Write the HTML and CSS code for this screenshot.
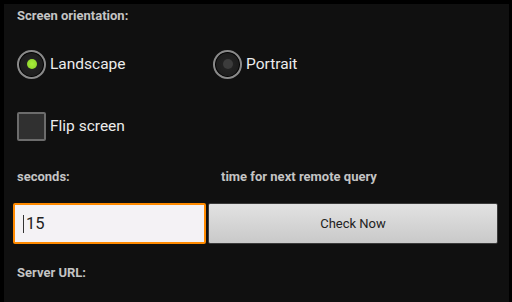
FILE: index.html
```html
<!DOCTYPE html>
<html lang="en">

<head>
    <meta charset="UTF-8">
    <title>Settings</title>
    <link rel="stylesheet" href="styles.css">
</head>

<body>
    <div class="screen">
        <div class="caption">Screen orientation:</div>
        <div class="radioRow">
            <label class="option landscape">
                <span class="radio checked"><span class="dot"></span></span>
                <span class="optText">Landscape</span>
            </label>
            <label class="option">
                <span class="radio"><span class="dot"></span></span>
                <span class="optText">Portrait</span>
            </label>
        </div>
        <label class="option flipRow">
            <span class="check"></span>
            <span class="optText">Flip screen</span>
        </label>
        <div class="labelRow">
            <div class="caption seconds">seconds:</div>
            <div class="caption">time for next remote query</div>
        </div>
        <div class="inputRow">
            <div class="field"><span class="cursor"></span>15</div>
            <div class="btn">Check Now</div>
        </div>
        <div class="caption server">Server URL:</div>
    </div>
</body>

</html>
```

FILE: styles.css
```css
* {
    padding: 0;
    margin: 0;
    box-sizing: border-box;
}

body {
    background-color: #000;
    font-family: Roboto, "Liberation Sans", sans-serif;
    width: 512px;
    height: 302px;
    overflow: hidden;
}

.screen {
    margin: 4px 3px 0 4px;
    height: 298px;
    background-color: #101010;
    padding-top: 4px;
}

.caption {
    font-size: 13px;
    line-height: 15px;
    font-weight: bold;
    color: #c4c4c4;
    padding-left: 13px;
}

.radioRow {
    display: flex;
    margin-top: 26px;
    height: 30px;
}

.option {
    display: flex;
    align-items: center;
    padding-left: 13px;
}

.landscape {
    width: 196px;
}

.radio {
    width: 29px;
    height: 29px;
    border-radius: 50%;
    border: 2px solid #8a8a8a;
    background: radial-gradient(circle, #262626 0%, #181818 100%);
    box-shadow: inset 0 0 0 1px #000;
    display: flex;
    align-items: center;
    justify-content: center;
}

.radio .dot {
    width: 10px;
    height: 10px;
    border-radius: 50%;
    background-color: #3c3c3c;
}

.radio.checked .dot {
    background: radial-gradient(circle, #a8ee3a 0%, #8ad12a 100%);
}

.optText {
    font-size: 15.5px;
    color: #ececec;
    margin-left: 4px;
}

.flipRow {
    margin-top: 32px;
    height: 30px;
}

.check {
    width: 29px;
    height: 29px;
    border: 2px solid #6c6c6c;
    border-radius: 2px;
    background-color: #303030;
}

.labelRow {
    display: flex;
    margin-top: 28px;
}

.seconds {
    width: 204px;
}

.inputRow {
    display: flex;
    margin-top: 19px;
    padding-left: 9px;
    height: 41px;
}

.field {
    width: 193px;
    border: 2px solid #ff8a00;
    border-radius: 2px;
    background-color: #f4f2f5;
    font-size: 16.5px;
    color: #222;
    display: flex;
    align-items: center;
    padding-left: 8px;
}

.cursor {
    width: 1px;
    height: 18px;
    background-color: #333;
    margin-right: 2px;
}

.btn {
    width: 290px;
    margin-left: 2px;
    border: 1px solid #3a3a3a;
    border-radius: 2px;
    background: linear-gradient(#e2e2e2, #c9c9c9);
    font-size: 13px;
    color: #222;
    display: flex;
    align-items: center;
    justify-content: center;
}

.server {
    margin-top: 21px;
}
```
